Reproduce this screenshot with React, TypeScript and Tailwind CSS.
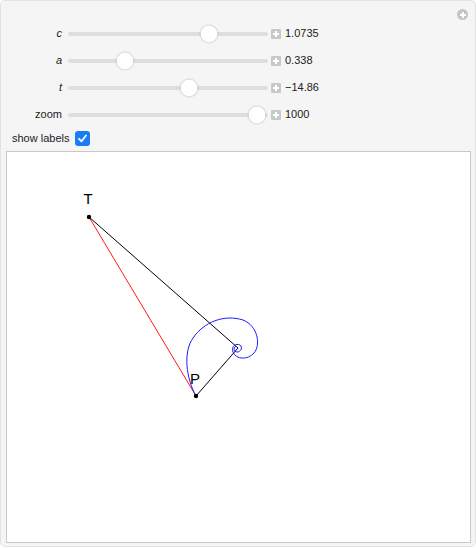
const sliders = [
  { label: "c", italic: true, pos: 208, value: "1.0735" },
  { label: "a", italic: true, pos: 124, value: "0.338" },
  { label: "t", italic: true, pos: 188, value: "\u221214.86" },
  { label: "zoom", italic: false, pos: 256, value: "1000" },
]

const PlusBox = () => (
  <div className="w-[10px] h-[10px] bg-[#c8c8c8] rounded-[1px] flex items-center justify-center relative">
    <div className="absolute w-[6px] h-[2px] bg-white" />
    <div className="absolute w-[2px] h-[6px] bg-white" />
  </div>
)

const SliderRow = ({ label, italic, pos, value }: any) => {
  return (
    <div className="flex items-center h-[27px]">
      <div className={"w-[62px] text-right pr-[1px] text-[11px] text-[#222] " + (italic ? "italic" : "")}>{label}</div>
      <div className="relative w-[200px] h-[4px] ml-[5px] bg-[#dedede] rounded-full">
        <div
          className="absolute top-1/2 w-[17px] h-[17px] -translate-x-1/2 -translate-y-1/2 bg-white rounded-full shadow-[0_0_2px_rgba(0,0,0,0.35)]"
          style={{ left: pos - 67 }}
        />
      </div>
      <div className="ml-[3px]">
        <PlusBox />
      </div>
      <div className="ml-[4px] text-[11px] text-[#222]">{value}</div>
    </div>
  )
}

const Plot = () => (
  <svg width="463" height="390" viewBox="0 0 463 390" className="block">
    <g transform="translate(-7,-152)">
      <line x1="89" y1="217" x2="238" y2="348" stroke="#000" strokeWidth="1" />
      <line x1="238" y1="348" x2="196" y2="396" stroke="#000" strokeWidth="1" />
      <line x1="89" y1="217" x2="196" y2="396" stroke="#ff1a1a" strokeWidth="1" />
      <path
        d="M196 396 C186 378, 183 352, 193 338 C204 322, 224 314, 243 320 C258 326, 261 345, 254 353 C248 360, 236 360, 233 352 C231 346, 236 343, 240 345 C243 347, 241 352, 237 352 C234 352, 233 348, 236 346"
        fill="none"
        stroke="#1a1aff"
        strokeWidth="1"
      />
      <circle cx="89" cy="217" r="2.2" fill="#000" />
      <circle cx="196" cy="396" r="2.2" fill="#000" />
      <text x="88" y="204" textAnchor="middle" fontSize="15" fontFamily="Liberation Sans, Arial, sans-serif" fill="#000">T</text>
      <text x="195" y="384" textAnchor="middle" fontSize="15" fontFamily="Liberation Sans, Arial, sans-serif" fill="#000">P</text>
    </g>
  </svg>
)

const App = () => {
  return (
    <div className="w-[476px] h-[548px] bg-white font-['Liberation_Sans',Arial,sans-serif]">
      <div className="relative w-[476px] h-[547px] bg-[#f5f5f5] border border-[#e2e2e2] rounded-[5px] flex flex-col">
        <div className="absolute right-[7px] top-[8px] w-[11px] h-[11px] rounded-full bg-[#c4c4c4] flex items-center justify-center">
          <div className="absolute w-[6px] h-[2px] bg-white" />
          <div className="absolute w-[2px] h-[6px] bg-white" />
        </div>
        <div className="flex flex-col pt-[19px]">
          {sliders.map((s) => (
            <SliderRow key={s.label} {...s} />
          ))}
        </div>
        <div className="flex items-center h-[20px] pl-[11px]">
          <span className="text-[11px] text-[#222]">show labels</span>
          <div className="ml-[6px] w-[15px] h-[15px] rounded-[3px] bg-[#1b7cf5] flex items-center justify-center">
            <svg width="11" height="11" viewBox="0 0 11 11">
              <path d="M2 5.8 L4.5 8.3 L9 2.5" fill="none" stroke="#fff" strokeWidth="1.8" strokeLinecap="round" strokeLinejoin="round" />
            </svg>
          </div>
        </div>
        <div className="mt-[3px] ml-[5px] w-[465px] h-[392px] border border-[#c8c8c8] bg-white">
          <Plot />
        </div>
      </div>
    </div>
  )
}

export default App
